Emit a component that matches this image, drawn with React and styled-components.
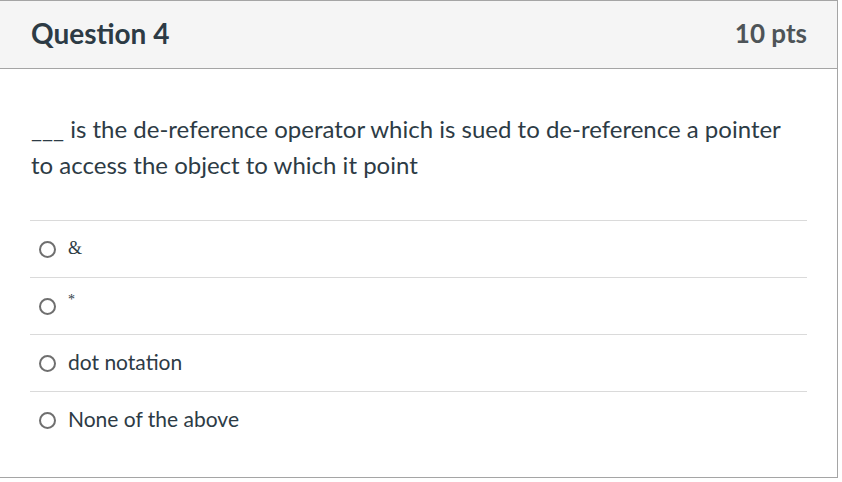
import React from "react";
import styled, { createGlobalStyle } from "styled-components";

const Global = createGlobalStyle`
  html, body {
    margin: 0;
    padding: 0;
    background: #fff;
  }
  body {
    font-family: Lato, "Liberation Sans", sans-serif;
    color: #2d3b45;
  }
`;

const Card = styled.div`
  width: 837px;
  height: 476px;
  border: 1px solid #a5a5a5;
  border-left: none;
  background: #fff;
  display: flex;
  flex-direction: column;
`;

const Header = styled.div`
  height: 68px;
  box-sizing: border-box;
  background: #f5f5f5;
  border-bottom: 1px solid #a5a5a5;
  display: flex;
  align-items: center;
  justify-content: space-between;
  padding: 0 30px 3px 31px;
`;

const Title = styled.h2`
  margin: 0;
  font-size: 28px;
  font-weight: 700;
  color: #2d3b45;
`;

const Points = styled.div`
  font-size: 26px;
  font-weight: 700;
  color: #4e5458;
`;

const Body = styled.div`
  padding: 42px 30px 0 31px;
`;

const Prompt = styled.p`
  margin: 0;
  max-width: 765px;
  font-size: 24px;
  line-height: 36px;
`;

const Answers = styled.div`
  margin-top: 37px;
  margin-left: -1px;
  width: 777px;
`;

const Answer = styled.label`
  display: flex;
  align-items: center;
  gap: 12px;
  height: 56px;
  border-top: 1px solid #dadada;
  padding-left: 9px;
  font-size: 21px;
`;

const Radio = styled.span`
  width: 13px;
  height: 13px;
  border: 2px solid #6f6f6f;
  border-radius: 50%;
  flex-shrink: 0;
`;

const Label = styled.span`
  font-family: ${(p) => (p.serif ? '"Liberation Serif", serif' : "inherit")};
  font-size: ${(p) => p.size || 21}px;
  position: relative;
  top: ${(p) => p.lift || 0}px;
`;

const answers = [
  { text: "&", serif: true, size: 18, lift: -1 },
  { text: "*", serif: true, size: 14, lift: -6 },
  { text: "dot notation", lift: -2 },
  { text: "None of the above", lift: -2 },
];

export default function App() {
  return (
    <>
      <Global />
      <Card>
        <Header>
          <Title>Question 4</Title>
          <Points>10 pts</Points>
        </Header>
        <Body>
          <Prompt>
            ___ is the de-reference operator which is sued to de-reference a
            pointer to access the object to which it point
          </Prompt>
          <Answers>
            {answers.map((a) => (
              <Answer key={a.text}>
                <Radio />
                <Label serif={a.serif} size={a.size} lift={a.lift}>
                  {a.text}
                </Label>
              </Answer>
            ))}
          </Answers>
        </Body>
      </Card>
    </>
  );
}
